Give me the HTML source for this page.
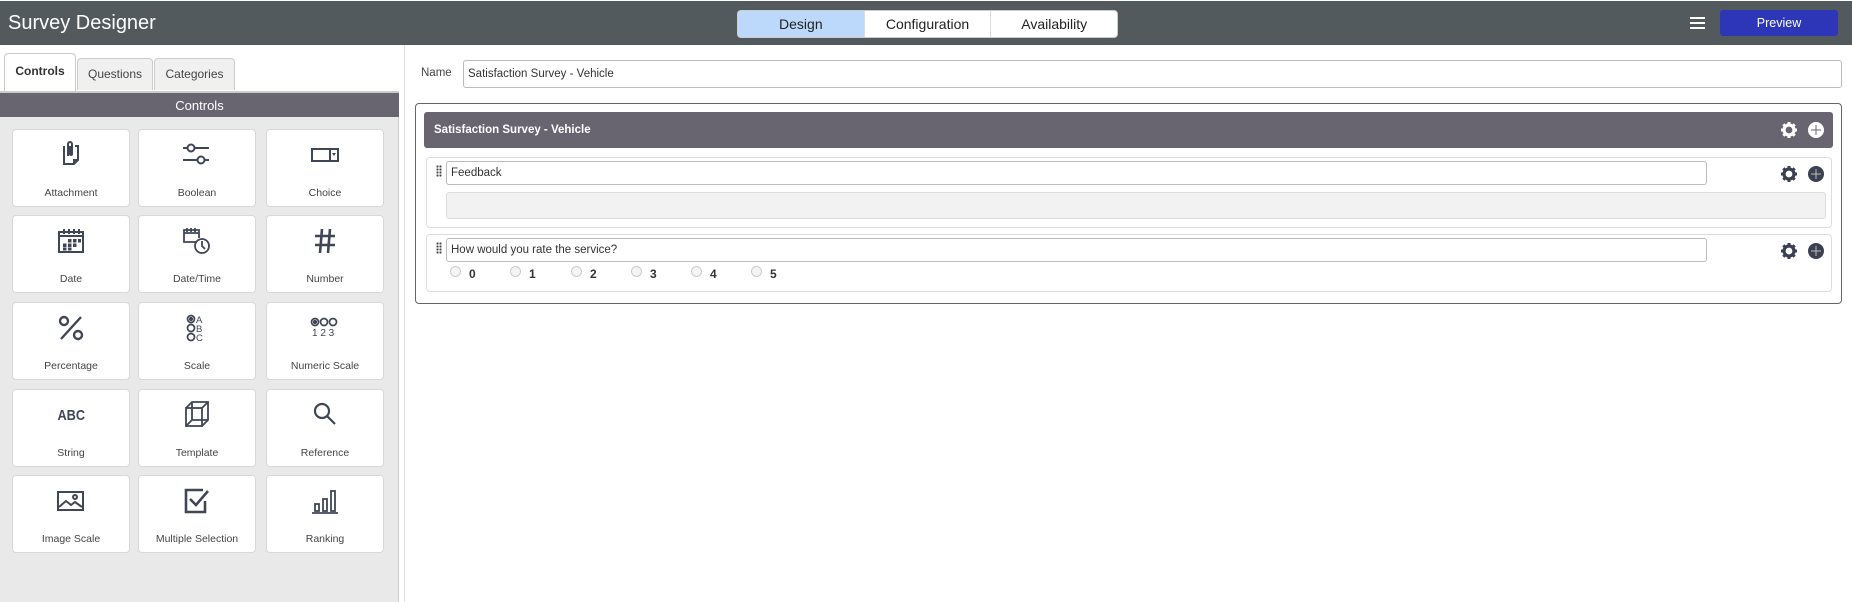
<!DOCTYPE html><html><head><style>
*{box-sizing:border-box;margin:0;padding:0}
body{width:1852px;height:602px;overflow:hidden;font-family:"Liberation Sans",sans-serif;background:#fff;position:relative;color:#333}
.abs{position:absolute}
.hdr{left:0;top:1px;width:1852px;height:44px;background:#525a5d}
.title{left:8px;top:12px;font-size:20px;color:#fff}
.seg{left:737px;top:10px;width:381px;height:28px;background:#fff;border-radius:4px;border:1px solid #ccc;display:flex;overflow:hidden}
.seg div{flex:1;text-align:center;line-height:26px;font-size:14px;color:#222;border-right:1px solid #ddd}
.seg div:first-child{background:#bcd8fb}
.seg div:last-child{border:none}
.prev{left:1720px;top:10px;width:118px;height:26px;background:#2c36b6;border-radius:3px;color:#fff;font-size:12.5px;text-align:center;line-height:26px}
.left{left:0;top:45px;width:399px;height:557px;background:#e9e9ea;border-right:1px solid #ccc}
.topw{left:0;top:45px;width:399px;height:46px;background:#fff}
.tab{top:58px;height:32px;background:#f0f0f0;border:1px solid #ccc;border-bottom:none;border-radius:4px 4px 0 0;font-size:12px;text-align:center;line-height:30px;color:#444}
.bar{left:0;top:91px;width:399px;height:26px;background:#686571;color:#fff;font-size:13px;text-align:center;line-height:25px;border-top:2px solid #ccc}
.card{width:118px;height:78px;background:#fff;border:1px solid #d8d8d8;border-radius:4px;font-size:10.5px;color:#444;text-align:center}
.card .ic{position:absolute;left:0;right:0;top:10px;height:30px;display:flex;justify-content:center;align-items:center}
.card .lb{position:absolute;left:0;right:0;top:57px}
.vline{left:404px;top:45px;width:1px;height:557px;background:#ddd}
.inp{border:1px solid #bbb;border-radius:3px;background:#fff;font-size:11.5px;color:#333;padding-left:4px}
.drag{width:6px;height:12px;background-image:radial-gradient(circle,#444 1px,transparent 1.2px);background-size:3px 3px}
</style></head><body>
<div class="abs hdr"></div>
<div class="abs title">Survey Designer</div>
<div class="abs seg"><div>Design</div><div>Configuration</div><div>Availability</div></div>
<div class="abs" style="left:1690px;top:17px;width:15px;height:2px;background:#fff;box-shadow:0 5px 0 #fff,0 10px 0 #fff"></div>
<div class="abs prev">Preview</div>
<div class="abs left"></div>
<div class="abs topw"></div>
<div class="abs tab" style="left:4px;top:53px;width:72px;height:38px;background:#fff;font-weight:bold;line-height:34px;color:#333;z-index:2">Controls</div>
<div class="abs tab" style="left:77px;width:76px">Questions</div>
<div class="abs tab" style="left:154px;width:81px">Categories</div>
<div class="abs bar">Controls</div>
<div class="abs vline"></div>

<div class="abs card" style="left:12px;top:129px"><div class="ic"><svg width="20" height="30" viewBox="0 0 20 30" fill="none" stroke="#3f4656" stroke-width="2"><path d="M3 6v18h10l4-4V6h-3M13 24v-4h4"/><path d="M7 16V4a2 2 0 014 0v10a1 1 0 01-2 0V6"/></svg></div><div class="lb">Attachment</div></div>
<div class="abs card" style="left:138px;top:129px"><div class="ic"><svg width="28" height="26" viewBox="0 0 28 26" fill="none" stroke="#3f4656" stroke-width="2"><circle cx="8" cy="6" r="3.5"/><path d="M0 6h4.5M11.5 6H26M0 18h14.5M21.5 18H26"/><circle cx="18" cy="18" r="3.5"/></svg></div><div class="lb">Boolean</div></div>
<div class="abs card" style="left:266px;top:129px"><div class="ic"><svg width="28" height="16" viewBox="0 0 28 16" fill="none" stroke="#3f4656" stroke-width="2"><rect x="1" y="2" width="26" height="12"/><path d="M19 2v12"/><path d="M21 6h4l-2 3z" fill="#3f4656" stroke="none"/></svg></div><div class="lb">Choice</div></div>

<div class="abs card" style="left:12px;top:215px"><div class="ic"><svg width="26" height="26" viewBox="0 0 26 26" fill="none" stroke="#3f4656" stroke-width="2"><rect x="1" y="4" width="24" height="20"/><path d="M1 8h24M6 1v5M11 1v5M16 1v5M21 1v5"/><g fill="#3f4656" stroke="none"><rect x="10" y="11" width="3.5" height="3.5"/><rect x="15" y="11" width="3.5" height="3.5"/><rect x="20" y="11" width="3" height="3.5"/><rect x="5" y="15.5" width="3.5" height="3.5"/><rect x="10" y="15.5" width="3.5" height="3.5"/><rect x="15" y="15.5" width="3.5" height="3.5"/><rect x="5" y="19.5" width="3.5" height="3"/><rect x="10" y="19.5" width="3.5" height="3"/></g></svg></div><div class="lb">Date</div></div>
<div class="abs card" style="left:138px;top:215px"><div class="ic"><svg width="28" height="28" viewBox="0 0 28 28" fill="none" stroke="#3f4656" stroke-width="1.8"><path d="M14 15H1V3h15v8M1 6h15M4 1v4M8 1v4M12 1v4"/><circle cx="19" cy="19" r="7"/><path d="M19 14v5l3 3"/></svg></div><div class="lb">Date/Time</div></div>
<div class="abs card" style="left:266px;top:215px"><div class="ic"><svg width="22" height="26" viewBox="0 0 22 26" fill="none" stroke="#3f4656" stroke-width="2.6"><path d="M8 1L6 25M16 1l-2 24M1 8h20M1 17h20"/></svg></div><div class="lb">Number</div></div>

<div class="abs card" style="left:12px;top:302px"><div class="ic"><svg width="26" height="26" viewBox="0 0 26 26" fill="none" stroke="#3f4656" stroke-width="2.4"><circle cx="6" cy="6" r="4"/><circle cx="20" cy="20" r="4"/><path d="M23 2L3 24"/></svg></div><div class="lb">Percentage</div></div>
<div class="abs card" style="left:138px;top:302px"><div class="ic"><svg width="24" height="28" viewBox="0 0 24 28" fill="none" stroke="#3f4656" stroke-width="1.7"><circle cx="6" cy="5" r="3.5"/><circle cx="6" cy="5" r="1.3" fill="#3f4656"/><circle cx="6" cy="14" r="3.5"/><circle cx="6" cy="23" r="3.5"/><text x="11" y="9" font-size="9.5" fill="#3f4656" stroke="none" font-family="Liberation Sans">A</text><text x="11" y="18" font-size="9.5" fill="#3f4656" stroke="none" font-family="Liberation Sans">B</text><text x="11" y="27" font-size="9.5" fill="#3f4656" stroke="none" font-family="Liberation Sans">C</text></svg></div><div class="lb">Scale</div></div>
<div class="abs card" style="left:266px;top:302px"><div class="ic"><svg width="30" height="22" viewBox="0 0 30 22" fill="none" stroke="#3f4656" stroke-width="1.7"><circle cx="5" cy="5" r="3.5"/><circle cx="5" cy="5" r="1.3" fill="#3f4656"/><circle cx="14" cy="5" r="3.5"/><circle cx="23" cy="5" r="3.5"/><text x="2" y="19" font-size="10" fill="#3f4656" stroke="none" font-family="Liberation Sans">1 2 3</text></svg></div><div class="lb">Numeric Scale</div></div>

<div class="abs card" style="left:12px;top:389px"><div class="ic" style="font-size:15px;font-weight:bold;color:#3f4656"><span style="display:inline-block;transform:scaleX(.85)">ABC</span></div><div class="lb">String</div></div>
<div class="abs card" style="left:138px;top:389px"><div class="ic"><svg width="26" height="28" viewBox="0 0 26 28" fill="none" stroke="#3f4656" stroke-width="1.8"><rect x="2" y="7" width="16" height="18"/><path d="M2 7l6-6h16v18l-6 6M18 7l6-6M8 1v18h16M8 19l-6 6"/></svg></div><div class="lb">Template</div></div>
<div class="abs card" style="left:266px;top:389px"><div class="ic"><svg width="26" height="28" viewBox="0 0 26 28" fill="none" stroke="#3f4656" stroke-width="2.2"><circle cx="10" cy="10" r="7"/><path d="M15 15l8 8"/></svg></div><div class="lb">Reference</div></div>

<div class="abs card" style="left:12px;top:475px"><div class="ic"><svg width="28" height="22" viewBox="0 0 28 22" fill="none" stroke="#3f4656" stroke-width="2"><rect x="1" y="2" width="25" height="18"/><path d="M2 17l7-6 5 4 4-3 7 5"/><circle cx="18" cy="7" r="2"/></svg></div><div class="lb">Image Scale</div></div>
<div class="abs card" style="left:138px;top:475px"><div class="ic"><svg width="28" height="28" viewBox="0 0 28 28" fill="none" stroke="#3f4656" stroke-width="2.6"><path d="M22 14v11H3V3h17"/><path d="M7 12l6 6L25 4"/></svg></div><div class="lb">Multiple Selection</div></div>
<div class="abs card" style="left:266px;top:475px"><div class="ic"><svg width="28" height="28" viewBox="0 0 28 28" fill="none" stroke="#3f4656" stroke-width="1.8"><path d="M1 26h26"/><rect x="4" y="17" width="4" height="7"/><rect x="12" y="12" width="4" height="12"/><rect x="20" y="4" width="4" height="20"/></svg></div><div class="lb">Ranking</div></div>

<div class="abs" style="left:421px;top:67px;font-size:11.5px;color:#444">Name</div>
<div class="abs inp" style="left:463px;top:60px;width:1379px;height:28px;line-height:26px">Satisfaction Survey - Vehicle</div>
<div class="abs" style="left:415px;top:103px;width:1427px;height:201px;border:1px solid #666;border-radius:4px"></div>
<div class="abs" style="left:424px;top:112px;width:1409px;height:36px;background:#686571;border-radius:3px;color:#fff;font-weight:bold;font-size:11.5px;line-height:36px;padding-left:10px">Satisfaction Survey - Vehicle</div>
<div class="abs" style="left:426px;top:157px;width:1406px;height:71px;border:1px solid #ddd;border-radius:4px"></div>
<div class="abs" style="left:426px;top:234px;width:1406px;height:58px;border:1px solid #ddd;border-radius:4px"></div>
<div class="abs drag" style="left:436px;top:165px"></div>
<div class="abs drag" style="left:436px;top:242px"></div>
<div class="abs inp" style="left:446px;top:161px;width:1261px;height:24px;line-height:22px">Feedback</div>
<div class="abs" style="left:446px;top:192px;width:1380px;height:27px;background:#f2f2f2;border:1px solid #ddd;border-radius:3px"></div>
<div class="abs inp" style="left:446px;top:238px;width:1261px;height:24px;line-height:22px">How would you rate the service?</div>

<div class="abs" style="left:450px;top:266px;font-size:12px;font-weight:bold;color:#333">
<span style="position:absolute;left:0;top:0;width:11px;height:11px;border:1px solid #ccc;border-radius:50%;background:#f4f4f4"></span><span style="position:absolute;left:19px;top:1px">0</span>
<span style="position:absolute;left:60px;top:0;width:11px;height:11px;border:1px solid #ccc;border-radius:50%;background:#f4f4f4"></span><span style="position:absolute;left:79px;top:1px">1</span>
<span style="position:absolute;left:121px;top:0;width:11px;height:11px;border:1px solid #ccc;border-radius:50%;background:#f4f4f4"></span><span style="position:absolute;left:140px;top:1px">2</span>
<span style="position:absolute;left:181px;top:0;width:11px;height:11px;border:1px solid #ccc;border-radius:50%;background:#f4f4f4"></span><span style="position:absolute;left:200px;top:1px">3</span>
<span style="position:absolute;left:241px;top:0;width:11px;height:11px;border:1px solid #ccc;border-radius:50%;background:#f4f4f4"></span><span style="position:absolute;left:260px;top:1px">4</span>
<span style="position:absolute;left:301px;top:0;width:11px;height:11px;border:1px solid #ccc;border-radius:50%;background:#f4f4f4"></span><span style="position:absolute;left:320px;top:1px">5</span>
</div>

<svg class="abs" style="left:0;top:0" width="1852" height="602">
<defs>
<g id="gear"><circle r="5" fill="none" stroke-width="3.2"/><g stroke-width="3"><path d="M0-8v3M0 5v3M-8 0h3M5 0h3M-5.7-5.7l2 2M3.7 3.7l2 2M-5.7 5.7l2-2M3.7-3.7l2-2"/></g></g>
</defs>
<use href="#gear" x="1789" y="130" stroke="#fff" fill="none"/>
<circle cx="1816" cy="130" r="8" fill="#fff"/><path d="M1811 130h10M1816 125v10" stroke="#686571" stroke-width="1"/>
<use href="#gear" x="1789" y="174" stroke="#3a4050"/>
<circle cx="1816" cy="174" r="8" fill="#3a4050"/><path d="M1811 174h10M1816 169v10" stroke="#bbb" stroke-width="1"/>
<use href="#gear" x="1789" y="251" stroke="#3a4050"/>
<circle cx="1816" cy="251" r="8" fill="#3a4050"/><path d="M1811 251h10M1816 246v10" stroke="#bbb" stroke-width="1"/>
</svg>
</body></html>
